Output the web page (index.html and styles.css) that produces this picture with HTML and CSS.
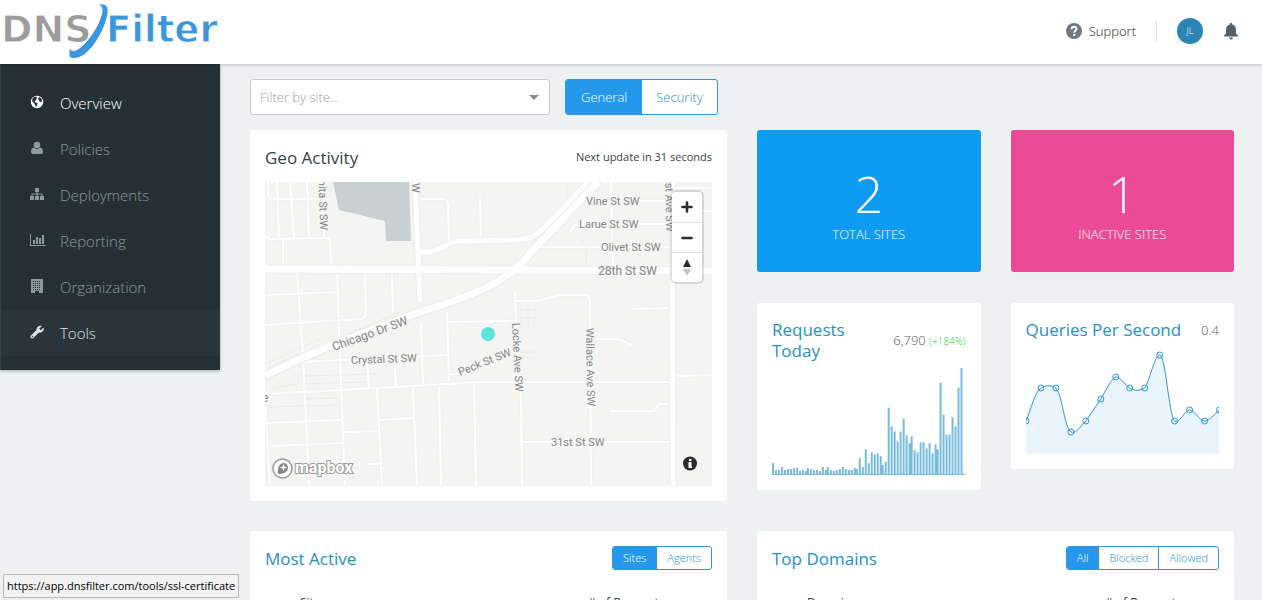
FILE: index.html
```html
<!DOCTYPE html>
<html lang="en">
<head>
<meta charset="utf-8">
<title>DNSFilter - Overview</title>
<meta name="viewport" content="width=device-width, initial-scale=1">
<link rel="stylesheet" href="styles.css">
</head>
<body>
<header class="topbar">
  <a class="brand" href="#" aria-label="DNSFilter">
    <svg width="220" height="62" viewBox="0 0 220 62">
      <text class="brand-dns" x="1" y="42">DNS</text>
      <text class="brand-filter" x="106" y="42">Filter</text>
      <path class="brand-swoosh" d="M97 5C104 2 109 5 108 13C106 27 96 46 84 55C78 59 71 60 69 56L69 48C73 53 78 50 84 44C93 35 101 20 102 11C102 7 101 5 97 5Z"/>
    </svg>
  </a>
  <nav class="top-actions">
    <a class="support" href="#">
      <svg width="16" height="16" viewBox="0 0 16 16"><circle cx="8" cy="8" r="8" fill="#6f7a80"/><path d="M5.6 6.2C5.7 3 10.5 3 10.4 6C10.4 7.800 8.200 7.800 8.200 9.700" fill="none" stroke="#fff" stroke-width="1.900"/><rect x="7.200" y="11" width="2" height="2" fill="#fff"/></svg>
      <span>Support</span>
    </a>
    <button class="avatar" type="button">JL</button>
    <button class="bell" type="button" aria-label="Notifications">
      <svg width="14" height="17" viewBox="0 0 14 17"><path fill="#53626a" d="M7 0C8 0 8.300.7 8.200 1.500C10.800 2.100 12 4.200 12 6.500V10.500L14 12.700V13.600H0V12.700L2 10.500V6.500C2 4.200 3.200 2.100 5.800 1.500C5.700.7 6 0 7 0ZM5 14.600H9C9 17 5 17 5 14.600Z"/></svg>
    </button>
  </nav>
</header>

<div class="layout">
  <aside class="sidebar">
    <nav class="menu">
      <a class="menu-item current" href="#">
        <svg class="menu-icon" viewBox="0 0 14 14"><circle cx="7" cy="7" r="6.200" fill="currentColor"/><path fill="#253035" d="M3.200 2.500L6 1.500L7.500 3L6 4L6.500 5L4.500 6L5.500 7.500L7.500 8L7.200 10L6 12L4.800 9L2.800 7L2 5ZM9 2L11.500 3.500L12 6L10.500 7.500L9 5.500L8.200 4Z"/></svg>
        Overview</a>
      <a class="menu-item" href="#">
        <svg class="menu-icon" viewBox="0 0 14 14"><circle cx="7" cy="4" r="3.300" fill="currentColor"/><path fill="currentColor" d="M4 6.500C5.500 8.300 8.500 8.300 10 6.500C12.500 6.800 13 9 13 11C13 12.500 12 13 11 13H3C2 13 1 12.500 1 11C1 9 1.500 6.800 4 6.500Z"/></svg>
        Policies</a>
      <a class="menu-item" href="#">
        <svg class="menu-icon" viewBox="0 0 14 14"><path fill="currentColor" d="M5 1H9V5H7.600V6.500H12.500V9H14V13H10V9H11.500V7.500H7.600V9H9V13H5V9H6.400V7.500H2.500V9H4V13H0V9H1.500V6.500H6.400V5H5Z"/></svg>
        Deployments</a>
      <a class="menu-item" href="#">
        <svg class="menu-icon wide" viewBox="0 0 16 14"><path fill="currentColor" d="M0 1H1V12H16V13H0ZM3 7H5V11H3ZM6 4H8V11H6ZM9 5H11V11H9ZM12 2H14V11H12Z"/></svg>
        Reporting</a>
      <a class="menu-item" href="#">
        <svg class="menu-icon" viewBox="0 0 14 14"><path fill="currentColor" d="M1 0H13V14H9V12H5V14H1Z"/><path stroke="#253035" stroke-width="1" stroke-dasharray="1 1" d="M3 2.500H11M3 4.500H11M3 6.500H11M3 8.500H11M3 10.500H11"/></svg>
        Organization</a>
      <a class="menu-item hovered" href="#">
        <svg class="menu-icon" viewBox="0 0 14 14"><path d="M2.200 11.800L8.500 5.500" stroke="currentColor" stroke-width="3.400" stroke-linecap="round"/><path fill="currentColor" d="M12 1L9.500 3.300V5H11L13.600 2.600C14.500 6 11.500 8.600 8.500 7.300L6.500 5.500C6 2.500 8.800-.3 12 1Z"/><circle cx="2.500" cy="11.500" r=".7" fill="#29353a"/></svg>
        Tools</a>
    </nav>
  </aside>

  <main class="content">
    <div class="filters">
      <div class="site-filter">
        <select aria-label="Filter by site"><option>Filter by site...</option></select>
        <svg class="caret" width="10" height="5" viewBox="0 0 10 5"><path d="M0 0H10L5 5Z" fill="#888"/></svg>
      </div>
      <div class="switch">
        <button class="on" type="button">General</button><button type="button">Security</button>
      </div>
    </div>

    <div class="dashboard">
      <section class="card geo">
        <div class="card-head">
          <h2 class="dark">Geo Activity</h2>
          <span class="countdown">Next update in 31 seconds</span>
        </div>
        <div class="map">
          <svg class="map-canvas" viewBox="265 182 447 304" preserveAspectRatio="xMidYMid slice">
            <path class="park" d="M333 182L339 210L385 221L386 241H411L409 182Z"/>
            <g class="faint">
              <path d="M302 376L377 374M302 384L366 382M265 407L340 405M305 399L340 398M265 369L300 354M265 364L325 337M270 388L298 384L297 374M522 304V330M528 304V330M534 304V330M516 310H536M516 318H536M520 352H536M520 358H536M580 237L586 247V265M567 182V196M346 335L400 312"/>
            </g>
            <g class="minor">
              <path d="M268 182V194Q268 199 273 199H320M277 182L279 238M290 182L294 238M307 182L309 238M265 235Q267 239 272 239L326 238Q330 238 330 242L331 268M283 238V268M324 228V238"/>
              <path d="M297 273L303 355L309 486M337 273L339 330L345 486M365 273L366 312Q366 319 358 319L265 325M265 295L337 292M392 273L393 313M420 199H443Q447 199 448 204L449 241M480 197L481 240M421 322L423 385M447 312L449 382M449 322L515 321"/>
              <path d="M515 292L517 350L521 400L522 486M516 301H538L560 295H584Q590 295 590 301L591 486M632 309L672 308M611 182L613 267M640 201H670M668 188H712M700 211H712M540 247H670M570 232Q574 224 580 224H670"/>
              <path d="M265 394L342 390L480 382H670M300 362L448 355M377 389L382 486M413 388L417 486M439 387L441 486M474 383L476 486M367 362L369 388M395 368L396 387M267 423L342 420M270 446L343 443M343 432L379 431M379 420L413 418M366 464H380M265 400L270 486M449 374L466 374"/>
              <path d="M522 442H671M610 411H652Q656 411 657 407T662 404H671M597 339H617Q626 341 632 346M676 376L712 375"/>
            </g>
            <g class="casing">
              <path d="M265 379Q300 361 345 343L420 315C470 300 510 285 534 252L601 182"/>
            </g>
            <g class="major">
              <path class="medium" d="M420 252H430C440 251 446 242 460 241L515 240C535 240 542 230 552 220L588 182M415 182L420 302M672 182L673 486"/>
              <path d="M265 269L712 271M265 376Q300 358 345 340L420 312C470 297 510 282 531 252L598 182"/>
            </g>
            <g class="labels">
              <text x="586" y="205">Vine St SW</text>
              <text x="579" y="228">Larue St SW</text>
              <text x="601" y="251">Olivet St SW</text>
              <text class="big" x="598" y="275">28th St SW</text>
              <text x="551" y="446">31st St SW</text>
              <text x="351" y="364" transform="rotate(-2 351 364)">Crystal St SW</text>
              <text class="big" x="334" y="351" transform="rotate(-20 334 351)">Chicago Dr SW</text>
              <text x="460" y="376" transform="rotate(-22 460 376)">Peck St SW</text>
              <text x="512" y="323" transform="rotate(87 512 323)">Locke Ave SW</text>
              <text x="586" y="328" transform="rotate(89 586 328)">Wallace Ave SW</text>
              <text x="318" y="167" transform="rotate(88 318 167)">Bonita St SW</text>
              <text x="412" y="183" transform="rotate(90 412 183)">W</text>
              <text x="665" y="166" transform="rotate(89 665 166)">Burst Ave SW</text>
              <text class="big" x="262" y="402">e</text>
            </g>
            <circle cx="488" cy="334" r="7" fill="#5be3e0"/>
            <g class="mapbox">
              <circle cx="282.500" cy="468.500" r="9.500" fill="#fff" stroke="#999" stroke-width="1.500"/>
              <path fill="#888" d="M278 474C276 462 287 460 288 467C288 473 283 474 278 474Z"/>
              <path fill="#fff" d="M283.500 464L284.500 466.500L287 467.500L284.500 468.500L283.500 471L282.500 468.500L280 467.500L282.500 466.500Z"/>
              <text x="295" y="473">mapbox</text>
            </g>
            <circle cx="690" cy="463.500" r="7" fill="#2c2c2c"/>
            <path fill="#fff" d="M689 459H691.500V461H689ZM688.500 462H691.500V466.500H692V468H688.500Z"/>
          </svg>
          <div class="map-controls">
            <button type="button" aria-label="Zoom in"><svg width="12" height="12" viewBox="0 0 12 12"><path d="M6 1.500V10.500M1.500 6H10.500" stroke="#2b2b2b" stroke-width="2.600" stroke-linecap="round"/></svg></button>
            <button type="button" aria-label="Zoom out"><svg width="12" height="12" viewBox="0 0 12 12"><path d="M1.500 6H10.500" stroke="#2b2b2b" stroke-width="2.600" stroke-linecap="round"/></svg></button>
            <button type="button" aria-label="Reset north"><svg width="10" height="18" viewBox="0 0 10 18"><path d="M5 0L9 8H1Z" fill="#2b2b2b"/><path d="M1 10H9L5 17Z" fill="#c4c4c4"/></svg></button>
          </div>
        </div>
      </section>

      <div class="stats">
        <section class="tile blue"><strong>2</strong><span>TOTAL SITES</span></section>
        <section class="tile pink"><strong>1</strong><span>INACTIVE SITES</span></section>
        <section class="card">
          <div class="card-head stat-head">
            <h2>Requests Today</h2>
            <span class="value">6,790 <small>(+184%)</small></span>
          </div>
          <svg class="bars" viewBox="0 0 194 108" preserveAspectRatio="none">
            <path d="M1 107v-11M4 107v-4M7 107v-4M10 107v-7M13 107v-4M16 107v-5M19 107v-5M22 107v-6M25 107v-6M28 107v-3M31 107v-4M34 107v-3M36 107v-6M39 107v-5M42 107v-4M45 107v-4M48 107v-3M51 107v-7M54 107v-4M56 107v-7M59 107v-4M62 107v-3M65 107v-4M68 107v-5M71 107v-7M74 107v-5M77 107v-4M80 107v-4M83 107v-6M85 107v-5M88 107v-16M91 107v-7M94 107v-25M97 107v-11M100 107v-22M103 107v-20M106 107v-21M109 107v-18M111 107v-9M114 107v-12M117 107v-67M120 107v-48M123 107v-43M126 107v-33M129 107v-43M132 107v-56M135 107v-39M138 107v-31M140 107v-38M143 107v-24M146 107v-22M149 107v-32M152 107v-32M155 107v-26M158 107v-31M161 107v-21M164 107v-30M166 107v-25M169 107v-92M172 107v-60M175 107v-40M178 107v-40M181 107v-57M184 107v-48M187 107v-87M190 107v-107"/>
            <path class="axis" d="M0 107.500H194"/>
          </svg>
        </section>
        <section class="card">
          <div class="card-head stat-head">
            <h2>Queries Per Second</h2>
            <span class="value">0.4</span>
          </div>
          <svg class="line" viewBox="0 0 194 104" preserveAspectRatio="none">
            <path class="area" d="M0 71C5 59 9 42 15 38C20 35 26 35 30 38C37 47 38 76 45 82C50 84 55 76 60 71C65 64 70 56 75 49C80 41 85 29 90 27C95 27 99 35 104 38C109 41 114 41 119 38C124 31 129 5 134 5C140 5 143 64 149 71C154 74 159 60 164 60C169 60 174 71 179 71C184 71 189 64 194 60V104H0Z"/>
            <path class="curve" d="M0 71C5 59 9 42 15 38C20 35 26 35 30 38C37 47 38 76 45 82C50 84 55 76 60 71C65 64 70 56 75 49C80 41 85 29 90 27C95 27 99 35 104 38C109 41 114 41 119 38C124 31 129 5 134 5C140 5 143 64 149 71C154 74 159 60 164 60C169 60 174 71 179 71C184 71 189 64 194 60"/>
            <g class="dots"><circle cx="0" cy="71" r="3"/><circle cx="15" cy="38" r="3"/><circle cx="30" cy="38" r="3"/><circle cx="45" cy="82" r="3"/><circle cx="60" cy="71" r="3"/><circle cx="75" cy="49" r="3"/><circle cx="90" cy="27" r="3"/><circle cx="104" cy="38" r="3"/><circle cx="119" cy="38" r="3"/><circle cx="134" cy="5" r="3"/><circle cx="149" cy="71" r="3"/><circle cx="164" cy="60" r="3"/><circle cx="179" cy="71" r="3"/><circle cx="194" cy="60" r="3"/></g>
          </svg>
        </section>
      </div>

      <section class="card">
        <div class="card-head">
          <h2>Most Active</h2>
          <div class="switch small"><button class="on" type="button">Sites</button><button type="button">Agents</button></div>
        </div>
        <table class="list"><thead><tr><th>Site</th><th class="count"># of Requests</th></tr></thead></table>
      </section>
      <section class="card">
        <div class="card-head">
          <h2>Top Domains</h2>
          <div class="switch small"><button class="on" type="button">All</button><button type="button">Blocked</button><button type="button">Allowed</button></div>
        </div>
        <table class="list domains"><thead><tr><th>Domain</th><th class="count"># of Requests</th></tr></thead></table>
      </section>
    </div>
  </main>
</div>
<div class="status">https://app.dnsfilter.com/tools/ssl-certificate</div>
</body>
</html>
```
FILE: styles.css
```css
* { box-sizing: border-box; }

body {
  margin: 0;
  height: 100vh;
  overflow: hidden;
  background: #edf1f1;
  color: #343f46;
  font: 300 14px/20px "Open Sans", "Noto Sans", sans-serif;
}

a { color: inherit; text-decoration: none; }
button { font: inherit; color: inherit; background: none; border: 0; padding: 0; }
svg { display: block; }

.topbar {
  position: relative;
  display: flex;
  justify-content: space-between;
  height: 64px;
  background: #fff;
  box-shadow: 0 1px 3px rgba(0, 0, 0, .2);
}
.brand-dns, .brand-filter {
  font: 700 38px "DejaVu Sans", sans-serif;
  stroke: #fff;
  stroke-width: 1;
}
.brand-dns { fill: #9c9c9c; }
.brand-filter { fill: #3b96dc; font-size: 37px; }
.brand-swoosh { fill: #3b96dc; stroke: #fff; stroke-width: 1; }

.top-actions { display: flex; align-items: center; padding: 0 24px 2px 0; }
.support {
  display: flex;
  align-items: center;
  gap: 7px;
  padding-right: 20px;
  border-right: 1px solid #d5dadb;
  color: #222;
  font-size: 13px;
}
.avatar {
  width: 26px;
  height: 26px;
  margin: 0 21px 0 20px;
  border-radius: 50%;
  background: #2d83b3;
  color: #fff;
  font-size: 9px;
}

.layout { display: grid; grid-template-columns: 220px 1fr; align-items: start; }

.sidebar {
  padding: 16px 0 14px;
  background: #253035;
  border-left: 1px solid #2f4a48;
  box-shadow: 0 1px 3px rgba(0, 0, 0, .3);
}
.menu-item {
  display: flex;
  align-items: center;
  gap: 16px;
  height: 46px;
  padding-left: 29px;
  color: #8c9a9e;
  font-size: 15px;
}
.menu-icon { width: 14px; height: 14px; margin-bottom: 2px; }
.menu-icon.wide { width: 16px; margin-right: -2px; }
.menu-item.current { color: #fff; }
.menu-item.hovered { background: #29353a; color: #dde4e6; }

.content { padding: 15px 28px 0 30px; }
.filters { display: flex; gap: 15px; margin-bottom: 15px; }
.site-filter { position: relative; width: 300px; }
.site-filter select {
  width: 100%;
  height: 36px;
  padding: 0 9px;
  border: 1px solid #c6cbcb;
  border-radius: 3px;
  appearance: none;
  background: #fff;
  color: #999;
  font: inherit;
  font-size: 13px;
}
.caret { position: absolute; right: 11px; top: 16px; }

.switch {
  display: flex;
  height: 36px;
  border: 1px solid #3295d8;
  border-radius: 3px;
  overflow: hidden;
  background: #fff;
  color: #2490cf;
  font-size: 13px;
}
.switch button { padding: 0 14px; }
.switch .on { background: #2598ec; color: #fff; padding-left: 15px; }
.switch button + button { border-left: 1px solid #3295d8; }
.switch.small { height: 24px; font-size: 11px; }
.switch.small button { padding: 0 10px; }

.dashboard { display: grid; grid-template-columns: 1fr 1fr; gap: 30px; }
.card {
  min-width: 0;
  padding: 15px;
  border-radius: 3px;
  background: #fff;
}
.card-head {
  display: flex;
  align-items: center;
  justify-content: space-between;
  height: 24px;
}
h2 { margin: 0; color: #2490c5; font-size: 17px; font-weight: 400; line-height: 21px; }
h2.dark { color: #343f46; }
.countdown { font-size: 11px; font-weight: 400; }

.geo .card-head { margin-bottom: 13px; }
.map { position: relative; }
.map-canvas { width: 100%; height: 304px; background: #f4f5f3; }
.park { fill: #c8d0d2; }
.faint, .minor, .major, .casing { fill: none; stroke: #fff; }
.faint { stroke: #eaebe9; stroke-width: 1; }
.minor { stroke-width: 2; filter: drop-shadow(0 0 1px #ececea); }
.casing { stroke: #e9eae8; stroke-width: 3; }
.major { stroke-width: 7; filter: drop-shadow(0 0 1px #e4e4e2); }
.medium { stroke-width: 5; }
.labels {
  fill: #858585;
  font: 400 11px Roboto, sans-serif;
  stroke: #f4f5f3;
  stroke-width: 2;
  paint-order: stroke;
}
.labels .big { font-size: 12px; }
.mapbox text {
  font: 700 16px Roboto, sans-serif;
  fill: #fff;
  stroke: #999;
  stroke-width: 2;
  paint-order: stroke;
}
.map-controls {
  position: absolute;
  top: 10px;
  right: 10px;
  width: 30px;
  border-radius: 4px;
  background: #fff;
  box-shadow: 0 0 0 2px rgba(0, 0, 0, .12);
}
.map-controls button { display: grid; place-items: center; width: 100%; height: 30px; }
.map-controls button + button { border-top: 1px solid #ddd; }

.stats {
  display: grid;
  grid-template-columns: 1fr 1fr;
  grid-template-rows: 142px auto;
  gap: 31px 30px;
  align-items: start;
}
.tile {
  display: flex;
  flex-direction: column;
  align-items: center;
  gap: 2px;
  height: 100%;
  padding-top: 36px;
  border-radius: 3px;
  color: #fff;
  font-size: 13px;
}
.tile strong { font-size: 50px; font-weight: 300; line-height: 56px; }
.tile.blue { background: #0d9bf3; }
.tile.pink { background: #eb4b94; }
.stat-head { height: auto; padding-top: 1px; }
.value { color: #555; white-space: nowrap; font-size: 13px; }
.value small { color: #2fd043; font-size: 10px; }
.bars { width: 100%; height: 107px; margin-top: 7px; stroke: #78bbdc; stroke-width: 2; }
.bars .axis { stroke-width: 1; }
.line { width: 100%; height: 104px; margin-top: 10px; }
.area { fill: #eaf4fc; }
.curve, .dots { fill: none; stroke: #3295bd; stroke-width: 1; }
.dots { stroke: #2598dc; }

.list { width: 100%; margin-top: 24px; border-collapse: collapse; font-size: 12px; }
.list th { padding: 0 0 40px 35px; text-align: left; font-weight: 400; line-height: 18px; }
.list .count { width: 124px; padding-left: 0; }
.domains .count { width: 114px; }

.status {
  position: fixed;
  left: 3px;
  bottom: 2px;
  padding: 1px 3px;
  border: 1px solid #b8b8b8;
  background: #f2f2f2;
  color: #000;
  font-size: 11px;
  font-weight: 400;
}
```
